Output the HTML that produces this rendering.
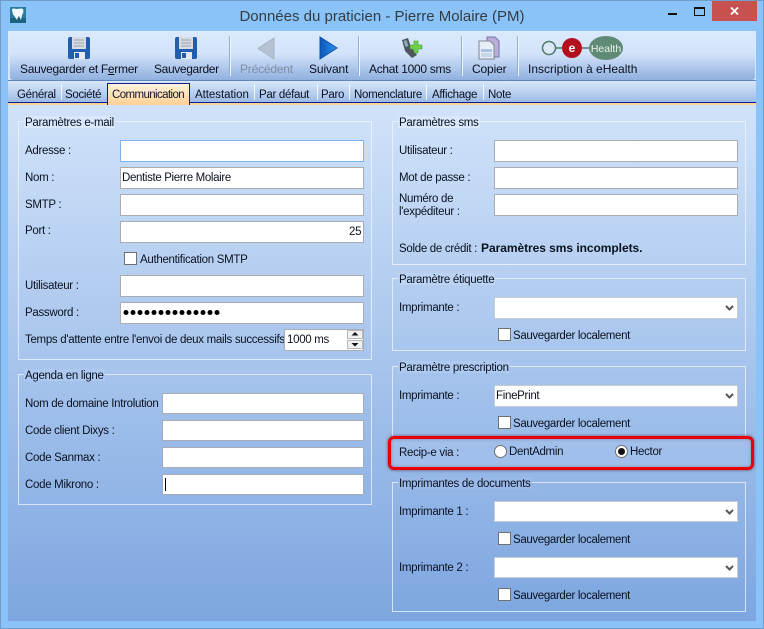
<!DOCTYPE html>
<html lang="fr"><head><meta charset="utf-8"><title>Données du praticien</title>
<style>
html,body{margin:0;padding:0}
body{width:764px;height:629px;overflow:hidden;position:relative;background:#8ac3f8;font:11.5px/14px "Liberation Sans",sans-serif;color:#0b1220}
div,span,svg{position:absolute;box-sizing:border-box}
.t{white-space:nowrap}
.i{background:#fff;border:1px solid #a9adb3;height:22px}
.g{border:1px solid rgba(240,246,252,.75)}
.l{background:none;white-space:nowrap;letter-spacing:-.3px;margin-top:1px}
.c{width:13px;height:13px;background:#fff;border:1px solid #707070}
.s{width:1px;top:36px;height:40px;background:#8fb0dc;box-shadow:1px 0 0 #f0f6ff}
.tab{top:88px;white-space:nowrap;letter-spacing:-.3px}
.sp{top:84px;width:1px;height:16px;background:#fff;opacity:.8}
.tb{top:62px;white-space:nowrap;color:#0b1220;font-size:12px}
</style></head><body>
<div style="left:0;top:0;width:764px;height:629px;border:1px solid #6f9cc8"></div>
<!-- title bar -->
<svg style="left:10px;top:7px" width="16" height="16" viewBox="0 0 16 16"><rect width="16" height="16" fill="#2a7ba0"/><rect y="11" width="16" height="5" fill="#1c6280"/><path d="M2 2c2-1 3 0 5 0s4-1 6 0c1 2 0 5-1 6l-1 5-2-4-1 1-1 3-2-3C4 9 2 6 2 2z" fill="#f0f6fa"/></svg>
<div class="t" style="left:0;top:8px;width:764px;text-align:center;font-size:15px;line-height:17px;color:#333d44">Données du praticien - Pierre Molaire (PM)</div>
<div style="left:668px;top:13px;width:9px;height:2px;background:#111"></div>
<div style="left:694px;top:7px;width:11px;height:9px;border:1px solid #111;border-top-width:2px"></div>
<div style="left:712px;top:1px;width:45px;height:20px;background:#c75050"></div>
<svg style="left:730px;top:7px" width="9" height="8" viewBox="0 0 9 8"><path d="M1 .5l7 7M8 .5l-7 7" stroke="#fff" stroke-width="1.800"/></svg>
<!-- content -->
<div style="left:8px;top:31px;width:748px;height:590px;background:linear-gradient(#dcebfd,#7da6e0)"></div>
<!-- toolbar -->
<div style="left:10px;top:32px;width:745px;height:48px;border-radius:3px;background:linear-gradient(#dbe9fc 0,#d3e3fa 45%,#8fb0df 100%)"></div>
<div style="left:8px;top:80px;width:748px;height:1px;background:#5f86bd"></div>
<svg style="left:68px;top:37px" width="22" height="22" viewBox="0 0 22 22"><rect width="22" height="22" rx="2" fill="#1f5fae"/><rect x="4" y="0" width="14" height="12" fill="#d8dce2"/><path d="M6 3h10M6 6h10M6 9h10" stroke="#9aa2ad"/><rect x="6" y="15" width="11" height="7" fill="#e6eaf0"/><rect x="7" y="16" width="4" height="5" fill="#1f5fae"/></svg>
<svg style="left:175px;top:37px" width="22" height="22" viewBox="0 0 22 22"><rect width="22" height="22" rx="2" fill="#1f5fae"/><rect x="4" y="0" width="14" height="12" fill="#d8dce2"/><path d="M6 3h10M6 6h10M6 9h10" stroke="#9aa2ad"/><rect x="6" y="15" width="11" height="7" fill="#e6eaf0"/><rect x="7" y="16" width="4" height="5" fill="#1f5fae"/></svg>
<svg style="left:257px;top:37px" width="18" height="23" viewBox="0 0 18 23"><path d="M17 1v21L1 11.500z" fill="#b4c2d2" stroke="#a5b3c4"/></svg>
<svg style="left:319px;top:36px" width="19" height="24" viewBox="0 0 19 24"><defs><linearGradient id="b" x1="0" x2="1"><stop offset="0" stop-color="#0d57b8"/><stop offset="1" stop-color="#2b94ea"/></linearGradient></defs><path d="M1 1v22L18 12z" fill="url(#b)" stroke="#0d4fa8"/></svg>
<svg style="left:400px;top:36px" width="23" height="24" viewBox="0 0 23 24"><path d="M2 4l6-2 3 9 6 8-5 3-7-7z" fill="#4e545c"/><path d="M3.500 5l3-1 2 6-3 1z" fill="#8faabf"/><path d="M14 5h4v4h4v4h-4v4h-4v-4h-4V9h4z" fill="#6fd04c" stroke="#3c9a2c" stroke-width=".6"/></svg>
<svg style="left:478px;top:36px" width="24" height="24" viewBox="0 0 24 24"><path d="M9 1h8l4 4v16H9z" fill="#b9aedb" stroke="#7b73a6"/><path d="M1 5h11l4 4v14H1z" fill="#e9eef6" stroke="#7e8794"/><rect x="3" y="13" width="11" height="3" fill="#a9c2e4"/><rect x="3" y="17" width="11" height="4" fill="#c6d6ea"/></svg>
<svg style="left:540px;top:35px" width="84" height="26" viewBox="0 0 84 26"><path d="M12 13h60" stroke="#4e7a66" stroke-width="1.500"/><circle cx="9" cy="13" r="6.500" fill="#dbe8fa" stroke="#4e7a66" stroke-width="1.500"/><circle cx="32" cy="13" r="10" fill="#b3101e"/><text x="32" y="17" text-anchor="middle" font-family="Liberation Sans" font-size="12" font-weight="bold" fill="#fff">e</text><ellipse cx="66" cy="13" rx="17" ry="12" fill="#5f8b76"/><text x="66" y="17" text-anchor="middle" font-family="Liberation Sans" font-size="10.500" fill="#e8f2ec">Health</text></svg>
<div class="tb" style="left:20px;letter-spacing:-.3px">Sauvegarder et F<u>e</u>rmer</div>
<div class="tb" style="left:154px;letter-spacing:-.36px">Sauvegarder</div>
<div class="tb" style="left:240px;color:#7f8ea3;letter-spacing:-.2px">Précédent</div>
<div class="tb" style="left:309px;letter-spacing:-.1px">Suivant</div>
<div class="tb" style="left:369px;letter-spacing:-.3px">Achat 1000 sms</div>
<div class="tb" style="left:472px;letter-spacing:-.15px">Copier</div>
<div class="tb" style="left:528px">Inscription à eHealth</div>
<div class="s" style="left:229px"></div><div class="s" style="left:358px"></div><div class="s" style="left:461px"></div><div class="s" style="left:517px"></div>
<!-- tabs -->
<div style="left:8px;top:81px;width:748px;height:21px;background:linear-gradient(#d8e7fb,#9dbbe6)"></div>
<div style="left:8px;top:102px;width:748px;height:1px;background:#0a1f8f"></div>
<div style="left:8px;top:103px;width:748px;height:2px;background:#ffd29a"></div>
<div style="left:107px;top:83px;width:83px;height:22px;border:1px solid #0a1f8f;border-bottom:0;background:linear-gradient(#fff3dc,#ffd093)"></div>
<div class="tab" style="left:17px">Général</div><div class="sp" style="left:61px"></div>
<div class="tab" style="left:65px">Société</div>
<div class="tab" style="left:112px;color:#10182a;letter-spacing:-.6px">Communication</div>
<div class="tab" style="left:195px;letter-spacing:-.05px">Attestation</div><div class="sp" style="left:254px"></div>
<div class="tab" style="left:259px">Par défaut</div><div class="sp" style="left:317px"></div>
<div class="tab" style="left:321px">Paro</div><div class="sp" style="left:349px"></div>
<div class="tab" style="left:354px">Nomenclature</div><div class="sp" style="left:426px"></div>
<div class="tab" style="left:432px">Affichage</div><div class="sp" style="left:483px"></div>
<div class="tab" style="left:488px">Note</div>
<!-- groups -->
<div class="g" style="left:18px;top:121px;width:354px;height:239px"></div>
<div class="g" style="left:18px;top:374px;width:354px;height:131px"></div>
<div class="g" style="left:392px;top:121px;width:354px;height:144px"></div>
<div class="g" style="left:392px;top:278px;width:354px;height:73px"></div>
<div class="g" style="left:392px;top:366px;width:354px;height:73px"></div>
<div class="g" style="left:392px;top:482px;width:354px;height:130px"></div>
<div class="l" style="left:24px;top:115px;padding:0 1px;background:#d9e8fc;height:12px">Paramètres e-mail</div>
<div class="l" style="left:24px;top:368px;padding:0 1px;background:#adc9f0;height:12px">Agenda en ligne</div>
<div class="l" style="left:398px;top:115px;padding:0 1px;background:#d9e8fc;height:12px">Paramètres sms</div>
<div class="l" style="left:398px;top:272px;padding:0 1px;background:#bcd3f3;height:12px">Paramètre étiquette</div>
<div class="l" style="left:398px;top:360px;padding:0 1px;background:#afcaf0;height:12px">Paramètre prescription</div>
<div class="l" style="left:398px;top:476px;padding:0 1px;background:#9ab9e8;height:12px">Imprimantes de documents</div>
<!-- email -->
<div class="l" style="left:25px;top:143px">Adresse :</div><div class="i" style="left:120px;top:140px;width:244px;border-color:#7eb4ea"></div>
<div class="l" style="left:25px;top:170px">Nom :</div><div class="i" style="left:120px;top:167px;width:244px"></div><div class="l" style="left:122px;top:170px;letter-spacing:-.35px">Dentiste Pierre Molaire</div>
<div class="l" style="left:25px;top:197px">SMTP :</div><div class="i" style="left:120px;top:194px;width:244px"></div>
<div class="l" style="left:25px;top:223px">Port :</div><div class="i" style="left:120px;top:221px;width:244px"></div><div class="l" style="left:349px;top:224px">25</div>
<div class="c" style="left:124px;top:252px"></div><div class="l" style="left:140px;top:252px">Authentification SMTP</div>
<div class="l" style="left:25px;top:278px">Utilisateur :</div><div class="i" style="left:120px;top:275px;width:244px"></div>
<div class="l" style="left:25px;top:305px">Password :</div><div class="i" style="left:120px;top:302px;width:244px"></div>
<svg style="left:123px;top:309px" width="98" height="7" viewBox="0 0 98 7" fill="#000"><circle cx="3" cy="3.500" r="2.500"/><circle cx="10" cy="3.500" r="2.500"/><circle cx="17" cy="3.500" r="2.500"/><circle cx="24" cy="3.500" r="2.500"/><circle cx="31" cy="3.500" r="2.500"/><circle cx="38" cy="3.500" r="2.500"/><circle cx="45" cy="3.500" r="2.500"/><circle cx="52" cy="3.500" r="2.500"/><circle cx="59" cy="3.500" r="2.500"/><circle cx="66" cy="3.500" r="2.500"/><circle cx="73" cy="3.500" r="2.500"/><circle cx="80" cy="3.500" r="2.500"/><circle cx="87" cy="3.500" r="2.500"/><circle cx="94" cy="3.500" r="2.500"/></svg>
<div class="l" style="left:25px;top:332px;width:260px;overflow:hidden">Temps d'attente entre l'envoi de deux mails successifs</div>
<div class="i" style="left:284px;top:329px;width:80px"></div><div class="l" style="left:287px;top:332px">1000 ms</div>
<div style="left:347px;top:330px;width:16px;height:9px;background:#f0f0f0;border:1px solid #b8b8b8"></div>
<div style="left:347px;top:340px;width:16px;height:9px;background:#f0f0f0;border:1px solid #b8b8b8"></div>
<svg style="left:351px;top:332px" width="8" height="15" viewBox="0 0 8 15" fill="#111"><path d="M4 0l3.500 3.500H.5zM.5 11h7L4 14.500z"/></svg>
<!-- agenda -->
<div class="l" style="left:25px;top:396px">Nom de domaine Introlution :</div><div class="i" style="left:162px;top:393px;width:202px;height:21px"></div>
<div class="l" style="left:25px;top:423px">Code client Dixys :</div><div class="i" style="left:162px;top:420px;width:202px;height:21px"></div>
<div class="l" style="left:25px;top:450px">Code Sanmax :</div><div class="i" style="left:162px;top:447px;width:202px;height:21px"></div>
<div class="l" style="left:25px;top:477px">Code Mikrono :</div><div class="i" style="left:162px;top:474px;width:202px;height:21px"></div>
<div style="left:165px;top:478px;width:1px;height:13px;background:#000"></div>
<!-- sms -->
<div class="l" style="left:399px;top:143px">Utilisateur :</div><div class="i" style="left:494px;top:140px;width:244px"></div>
<div class="l" style="left:399px;top:170px">Mot de passe :</div><div class="i" style="left:494px;top:167px;width:244px"></div>
<div class="l" style="left:399px;top:192px;line-height:13px">Numéro de<br>l'expéditeur :</div><div class="i" style="left:494px;top:194px;width:244px"></div>
<div class="l" style="left:399px;top:241px">Solde de crédit :</div>
<div class="t" style="left:481px;top:241px;font-size:12px;font-weight:bold;letter-spacing:-.05px">Paramètres sms incomplets.</div>
<!-- etiquette -->
<div class="l" style="left:399px;top:300px">Imprimante :</div><div class="i" style="left:494px;top:297px;width:244px;border-color:#c8ccd2"></div>
<div class="c" style="left:498px;top:328px"></div><div class="l" style="left:513px;top:328px;letter-spacing:-.35px">Sauvegarder localement</div>
<!-- prescription -->
<div class="l" style="left:399px;top:388px">Imprimante :</div><div class="i" style="left:494px;top:385px;width:244px;border-color:#c8ccd2"></div><div class="l" style="left:496px;top:388px">FinePrint</div>
<div class="c" style="left:498px;top:416px"></div><div class="l" style="left:513px;top:416px;letter-spacing:-.35px">Sauvegarder localement</div>
<!-- recip -->
<div style="left:388px;top:436px;width:366px;height:34px;border:3px solid #e90008;border-radius:6px;box-shadow:0 0 3px rgba(60,0,0,.6),inset 0 0 3px rgba(60,0,0,.3);background:#a1bfeb"></div>
<div class="l" style="left:399px;top:445px">Recip-e via :</div>
<div style="left:494px;top:445px;width:13px;height:13px;border-radius:50%;background:#fff;border:1px solid #707070"></div><div class="l" style="left:509px;top:444px">DentAdmin</div>
<div style="left:615px;top:445px;width:13px;height:13px;border-radius:50%;background:#fff;border:1px solid #707070"></div><div style="left:618px;top:448px;width:7px;height:7px;border-radius:50%;background:#111"></div><div class="l" style="left:630px;top:444px">Hector</div>
<!-- docs -->
<div class="l" style="left:399px;top:504px">Imprimante 1 :</div><div class="i" style="left:494px;top:501px;width:244px;height:21px;border-color:#c8ccd2"></div>
<div class="c" style="left:498px;top:532px"></div><div class="l" style="left:513px;top:532px;letter-spacing:-.35px">Sauvegarder localement</div>
<div class="l" style="left:399px;top:560px">Imprimante 2 :</div><div class="i" style="left:494px;top:557px;width:244px;height:21px;border-color:#c8ccd2"></div>
<div class="c" style="left:498px;top:588px"></div><div class="l" style="left:513px;top:588px;letter-spacing:-.35px">Sauvegarder localement</div>
<svg style="left:725px;top:305px" width="9" height="6" viewBox="0 0 9 6"><path d="M1 1l3.500 3.500L8 1" fill="none" stroke="#555" stroke-width="2"/></svg>
<svg style="left:725px;top:393px" width="9" height="6" viewBox="0 0 9 6"><path d="M1 1l3.500 3.500L8 1" fill="none" stroke="#555" stroke-width="2"/></svg>
<svg style="left:725px;top:509px" width="9" height="6" viewBox="0 0 9 6"><path d="M1 1l3.500 3.500L8 1" fill="none" stroke="#555" stroke-width="2"/></svg>
<svg style="left:725px;top:565px" width="9" height="6" viewBox="0 0 9 6"><path d="M1 1l3.500 3.500L8 1" fill="none" stroke="#555" stroke-width="2"/></svg>
</body></html>
